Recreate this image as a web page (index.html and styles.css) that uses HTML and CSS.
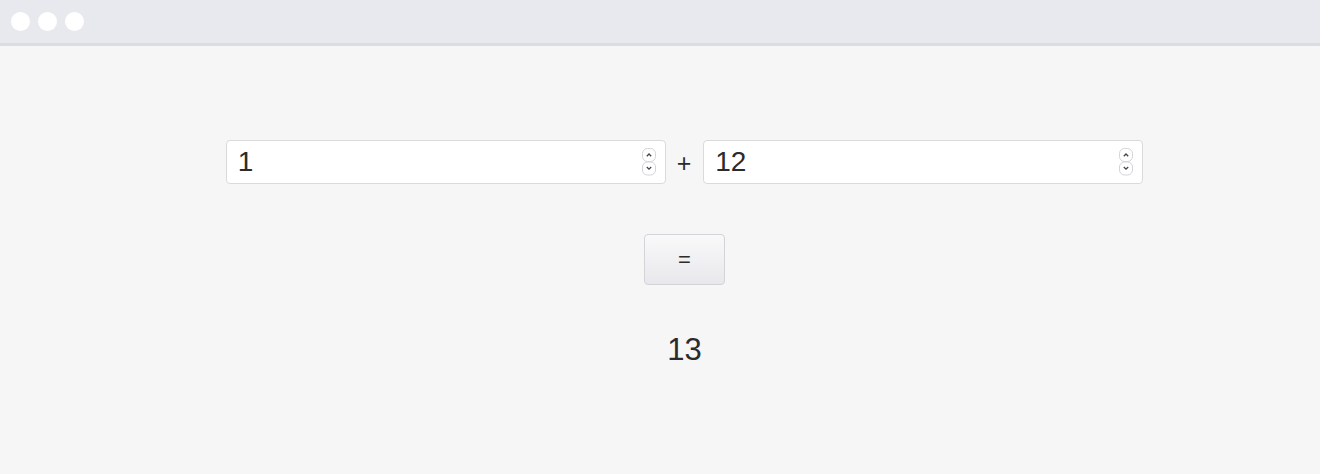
FILE: index.html
```html
<!DOCTYPE html>
<html>
<head>
<meta charset="utf-8">
<link rel="stylesheet" href="styles.css">
</head>
<body>
<div class="titlebar">
  <span class="dot"></span><span class="dot"></span><span class="dot"></span>
</div>
<main class="content">
  <div class="row">
    <div class="field">
      <input class="num" type="text" value="1">
      <svg class="spin" width="14" height="28" viewBox="0 0 14 28">
        <rect x="0.5" y="0.5" width="13" height="13" rx="5" fill="#fff" stroke="#d4d4d8"/>
        <rect x="0.5" y="14" width="13" height="13" rx="5" fill="#fff" stroke="#d4d4d8"/>
        <path d="M4.8 8.2 L7 6 L9.2 8.2" fill="none" stroke="#444" stroke-width="1.3"/>
        <path d="M4.8 19 L7 21.2 L9.2 19" fill="none" stroke="#444" stroke-width="1.3"/>
      </svg>
    </div>
    <span class="op">+</span>
    <div class="field">
      <input class="num" type="text" value="12">
      <svg class="spin" width="14" height="28" viewBox="0 0 14 28">
        <rect x="0.5" y="0.5" width="13" height="13" rx="5" fill="#fff" stroke="#d4d4d8"/>
        <rect x="0.5" y="14" width="13" height="13" rx="5" fill="#fff" stroke="#d4d4d8"/>
        <path d="M4.8 8.2 L7 6 L9.2 8.2" fill="none" stroke="#444" stroke-width="1.3"/>
        <path d="M4.8 19 L7 21.2 L9.2 19" fill="none" stroke="#444" stroke-width="1.3"/>
      </svg>
    </div>
  </div>
  <button class="eq" type="button">=</button>
  <div class="result">13</div>
</main>
</body>
</html>
```
FILE: styles.css
```css
html, body {
  margin: 0;
  padding: 0;
  background: #f6f6f6;
  font-family: "Liberation Sans", Arial, sans-serif;
  color: #2b2b2b;
}
.titlebar {
  height: 43px;
  background: #e8e9ee;
  border-bottom: 3px solid #dcdde2;
  display: flex;
  align-items: center;
  gap: 8px;
  padding-left: 11px;
}
.dot {
  width: 19px;
  height: 19px;
  border-radius: 50%;
  background: #ffffff;
}
.content {
  display: flex;
  flex-direction: column;
  align-items: center;
  padding-top: 94px;
  padding-left: 49px;
}
.row {
  display: flex;
  align-items: center;
}
.field {
  width: 440px;
  height: 44px;
  box-sizing: border-box;
  background: #fff;
  border: 1px solid #dadadd;
  border-radius: 4px;
  display: flex;
  align-items: center;
  padding: 0 9px 0 11px;
}
.num {
  flex: 1;
  min-width: 0;
  border: none;
  outline: none;
  background: transparent;
  font-family: "Liberation Sans", Arial, sans-serif;
  font-size: 28px;
  color: #2b2b2b;
  padding: 0;
}
.spin {
  flex: none;
  display: block;
}
.op {
  font-size: 25px;
  margin: 2px 12px 0 11px;
  color: #2b2b2b;
}
.eq {
  margin-top: 50px;
  width: 81px;
  height: 51px;
  border: 1px solid #d4d4d8;
  border-radius: 4px;
  background: linear-gradient(#f9f9fa, #e8e8ec);
  font-family: "Liberation Sans", Arial, sans-serif;
  font-size: 22px;
  color: #2b2b2b;
  padding: 0;
}
.result {
  margin-top: 47px;
  font-size: 31px;
}
```
